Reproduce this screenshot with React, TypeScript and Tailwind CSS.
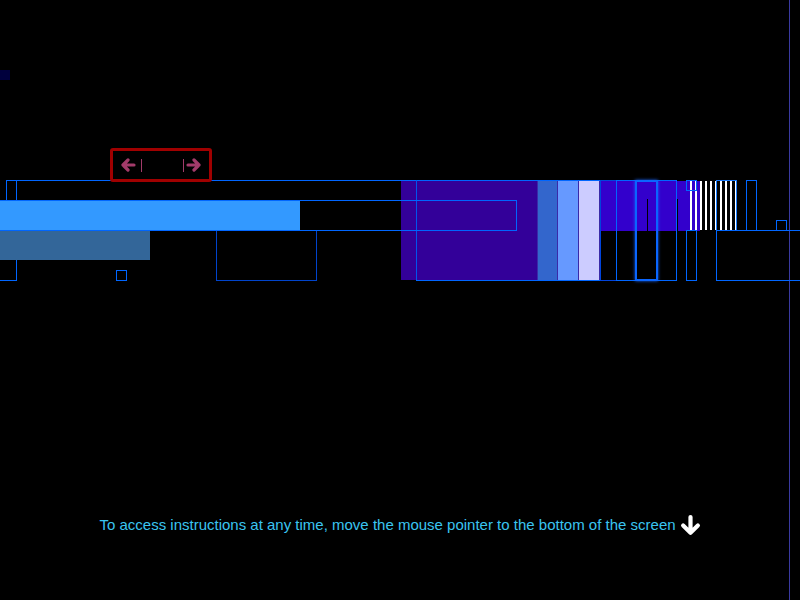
import React from 'react'

// outline boxes of the layout map, in canvas pixels
const OUTLINES = [
  { x: 216, y: 230, w: 101, h: 51, c: 'border-[#0044cc]' },
  { x: 116, y: 270, w: 11, h: 11, c: 'border-[#0066ff]' },
  { x: 600, y: 180, w: 17, h: 101, c: 'border-[#0044dd]' },
  { x: 616, y: 180, w: 21, h: 101, c: 'border-[#0066ff]' },
  { x: 656, y: 180, w: 21, h: 101, c: 'border-[#0066ff]' },
  { x: 686, y: 180, w: 11, h: 11, c: 'border-[#0066ff]' },
  { x: 686, y: 230, w: 11, h: 51, c: 'border-[#0066ff]' },
  { x: 716, y: 180, w: 21, h: 51, c: 'border-[#1a7cff]' },
  { x: 746, y: 180, w: 11, h: 51, c: 'border-[#0066ff]' },
  { x: 716, y: 230, w: 100, h: 51, c: 'border-[#0066ff]' },
  { x: 776, y: 220, w: 11, h: 11, c: 'border-[#0066ff]' },
]

const STRIPES = [690, 695, 700, 705, 710, 715, 720, 725, 730, 735]

function Arrow({ dir }: { dir: 'left' | 'right' }) {
  return (
    <svg width="16" height="14" viewBox="0 0 16 14" className={dir === 'left' ? '' : 'rotate-180'}>
      <path
        d="M14 7H3M8 2L3 7l5 5"
        fill="none"
        stroke="#a33b6a"
        strokeWidth="3.2"
        strokeLinecap="round"
        strokeLinejoin="round"
      />
    </svg>
  )
}

export default function App() {
  return (
    <div className="w-[800px] h-[600px] bg-black overflow-hidden flex flex-col font-['Liberation_Sans',Arial,sans-serif]">
      <div className="relative h-[513px] shrink-0">
        {/* full-height rule on the right */}
        <div className="absolute left-[789px] top-0 w-px h-[600px] bg-[#3a3aa0]" />

        <div className="absolute left-0 top-[70px] w-[10px] h-[10px] bg-[#00003d]" />

        {/* outer frames, drawn beneath the fills */}
        <div className="absolute left-[6px] top-[180px] w-[671px] h-[51px] border border-[#0066ff]" />
        <div className="absolute left-0 top-[180px] w-[17px] h-[101px] border-r border-b border-[#0066ff]" />
        <div className="absolute left-[416px] top-[180px] w-[261px] h-[101px] border border-[#0066ff]" />

        {/* fills */}
        <div className="absolute left-0 top-[200px] w-[300px] h-[30px] bg-[#3399ff]" />
        <div className="absolute left-0 top-[230px] w-[150px] h-[30px] bg-[#336699]" />
        <div className="absolute left-[401px] top-[181px] w-[136px] h-[99px] bg-[#330099]" />
        <div className="absolute left-[416px] top-[180px] w-px h-[101px] bg-[#0055ee]" />
        <div className="absolute left-[416px] top-[280px] w-[261px] h-px bg-[#0066ff]" />
        <div className="absolute left-[537px] top-[181px] w-[21px] h-[99px] bg-[#3366cc] border-x border-[#3a2aa8]" />
        <div className="absolute left-[557px] top-[181px] w-[22px] h-[99px] bg-[#6699ff] border-x border-[#3a2aa8]" />
        <div className="absolute left-[578px] top-[181px] w-[22px] h-[99px] bg-[#ccccff] border-x border-[#3a2aa8]" />
        <div className="absolute left-[600px] top-[181px] w-[100px] h-[50px] bg-[#3300cc]" />
        <div className="absolute left-[647px] top-[199px] w-px h-[32px] bg-black" />
        <div className="absolute left-[677px] top-[199px] w-px h-[32px] bg-black" />
        {STRIPES.map((x) => (
          <div key={x} className="absolute top-[181px] w-[2px] h-[49px] bg-white" style={{ left: x }} />
        ))}

        {OUTLINES.map((o, i) => (
          <div
            key={i}
            className={`absolute border ${o.c}`}
            style={{ left: o.x, top: o.y, width: o.w, height: o.h }}
          />
        ))}

        {/* value bar outline */}
        <div className="absolute left-[-2px] top-[200px] w-[519px] h-[31px] border border-[#0066ff]" />

        {/* selected cell */}
        <div className="absolute left-[635px] top-[180px] w-[23px] h-[101px] border-2 border-[#0a66ff] shadow-[0_0_3px_#1a66ff]" />

        {/* pager */}
        <div className="absolute left-[110px] top-[148px] w-[102px] h-[34px] border-[3px] border-[#a00000] rounded-[3px] bg-black flex items-center px-[7px]">
          <Arrow dir="left" />
          <div className="w-px h-[13px] bg-[#a33b6a] ml-[5px]" />
          <div className="flex-1" />
          <div className="w-px h-[13px] bg-[#a33b6a] mr-[2px]" />
          <Arrow dir="right" />
        </div>
      </div>

      <div className="flex items-center justify-center gap-[4px] text-[15px] leading-[24px] text-[#3ac5f0]">
        <span>To access instructions at any time, move the mouse pointer to the bottom of the screen</span>
        <svg width="21" height="21" viewBox="0 0 20 20">
          <path
            d="M10 2v14M3 10l7 7 7-7"
            fill="none"
            stroke="white"
            strokeWidth="4"
            strokeLinecap="round"
            strokeLinejoin="round"
          />
        </svg>
      </div>
    </div>
  )
}
